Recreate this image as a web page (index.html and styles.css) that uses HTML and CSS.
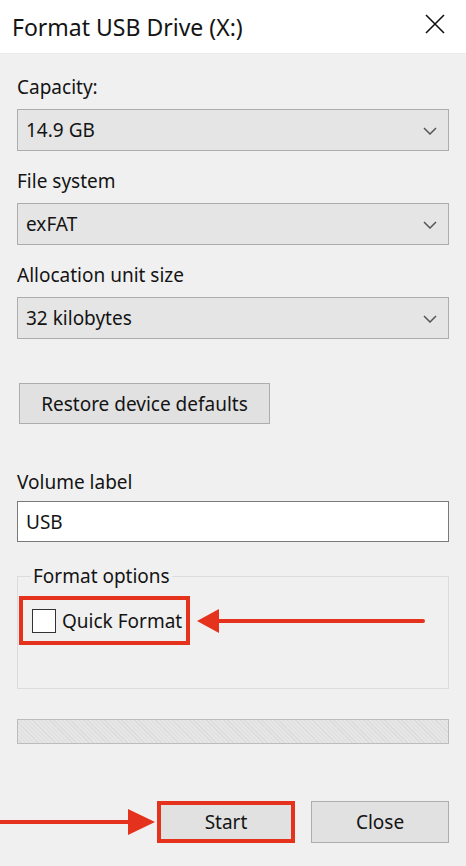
FILE: index.html
```html
<!DOCTYPE html>
<html lang="en">

<head>
	<meta charset="UTF-8">
	<meta name="viewport" content="width=device-width, initial-scale=1.0">
	<title>Format USB Drive (X:)</title>
	<link rel="stylesheet" href="styles.css">
</head>

<body>
	<div id="window">
		<header class="titlebar">
			<span class="title">Format USB Drive (X:)</span>
			<svg class="close-x" width="20" height="20" viewBox="0 0 20 20">
				<path d="M1 1 L19 19 M19 1 L1 19" stroke="#111" stroke-width="1.6" fill="none" />
			</svg>
		</header>

		<div class="content">
			<label class="field-label first">Capacity:</label>
			<div class="combo">
				<span>14.9 GB</span>
				<svg class="chev" width="14" height="8" viewBox="0 0 14 8">
					<path d="M1 1 L7 7 L13 1" stroke="#555" stroke-width="1.5" fill="none" />
				</svg>
			</div>

			<label class="field-label">File system</label>
			<div class="combo">
				<span>exFAT</span>
				<svg class="chev" width="14" height="8" viewBox="0 0 14 8">
					<path d="M1 1 L7 7 L13 1" stroke="#555" stroke-width="1.5" fill="none" />
				</svg>
			</div>

			<label class="field-label">Allocation unit size</label>
			<div class="combo">
				<span>32 kilobytes</span>
				<svg class="chev" width="14" height="8" viewBox="0 0 14 8">
					<path d="M1 1 L7 7 L13 1" stroke="#555" stroke-width="1.5" fill="none" />
				</svg>
			</div>

			<button class="btn restore">Restore device defaults</button>

			<label class="field-label volume">Volume label</label>
			<div class="textbox">USB</div>

			<fieldset class="options">
				<legend>Format options</legend>
				<div class="quick-row">
					<div class="highlight">
						<span class="checkbox"></span>
						<span>Quick Format</span>
					</div>
					<svg class="arrow-left" width="230" height="26" viewBox="0 0 230 26">
						<polygon points="0,13 22,1 22,25" fill="#e5321d" />
						<rect x="18" y="11" width="210" height="4" rx="2" fill="#e5321d" />
					</svg>
				</div>
			</fieldset>

			<div class="progress"></div>

			<div class="actions">
				<svg class="arrow-right" width="155" height="28" viewBox="0 0 155 28">
					<rect x="0" y="12" width="134" height="4" fill="#e5321d" />
					<polygon points="155,14 128,1 128,27" fill="#e5321d" />
				</svg>
				<button class="btn action start">Start</button>
				<button class="btn action">Close</button>
			</div>
		</div>
	</div>
</body>

</html>
```

FILE: styles.css
```css
html,
body {
	margin: 0;
	width: 466px;
	height: 866px;
	overflow: hidden;
	font-family: 'Noto Sans', 'Open Sans', sans-serif;
	color: #141414;
	background: #f0f0f0;
}

#window {
	display: flex;
	flex-direction: column;
	height: 866px;
}

.titlebar {
	height: 54px;
	background: #fff;
	display: flex;
	align-items: center;
	justify-content: space-between;
	padding: 0 21px 0 12px;
	border-bottom: 1px solid #ececec;
	box-sizing: border-box;
}

.title {
	font-size: 23px;
}

.close-x {
	margin-top: -6px;
}

.content {
	display: flex;
	flex-direction: column;
	padding: 0 17px;
}

.field-label {
	font-size: 19px;
	line-height: 22px;
	margin: 19px 0 11px;
}

.field-label.first {
	margin-top: 22px;
}

.combo {
	height: 42px;
	box-sizing: border-box;
	background: #e5e5e5;
	border: 1px solid #adadad;
	display: flex;
	align-items: center;
	justify-content: space-between;
	padding: 0 11px 0 8px;
	font-size: 19px;
}

.chev {
	margin-top: 2px;
}

.btn {
	font: inherit;
	font-size: 19px;
	color: #141414;
	background: #e1e1e1;
	border: 1px solid #adadad;
	padding: 0;
}

.restore {
	align-self: flex-start;
	width: 251px;
	height: 41px;
	margin: 44px 0 0 2px;
}

.field-label.volume {
	margin: 47px 0 8px;
}

.textbox {
	height: 41px;
	box-sizing: border-box;
	background: #fff;
	border: 1px solid #7a7a7a;
	display: flex;
	align-items: center;
	padding: 0 8px;
	font-size: 19px;
}

.options {
	margin: 23px 0 0;
	padding: 0 0 40px 1px;
	border: 1px solid #dcdcdc;
	height: 124px;
	box-sizing: border-box;
}

.options legend {
	font-size: 19px;
	line-height: 22px;
	padding: 0 2px;
	margin-left: 12px;
}

.quick-row {
	display: flex;
	align-items: center;
	margin-top: 9px;
}

.highlight {
	display: flex;
	align-items: center;
	gap: 6px;
	border: 4px solid #e5321d;
	height: 49px;
	box-sizing: border-box;
	padding: 0 4px 0 9px;
	font-size: 19px;
}

.checkbox {
	width: 24px;
	height: 24px;
	box-sizing: border-box;
	border: 1px solid #333;
	background: #fff;
}

.arrow-left {
	margin-left: 7px;
}

.progress {
	height: 25px;
	box-sizing: border-box;
	margin-top: 30px;
	border: 1px solid #bcbcbc;
	background: repeating-linear-gradient(45deg, #e6e6e6 0 2px, #dcdcdc 2px 3px);
}

.actions {
	display: flex;
	align-items: center;
	margin: 57px 0 0 -17px;
}

.arrow-right {
	margin-right: 2px;
}

.action {
	width: 138px;
	height: 42px;
}

.start {
	border: 4px solid #e5321d;
	margin-right: 16px;
}
```
